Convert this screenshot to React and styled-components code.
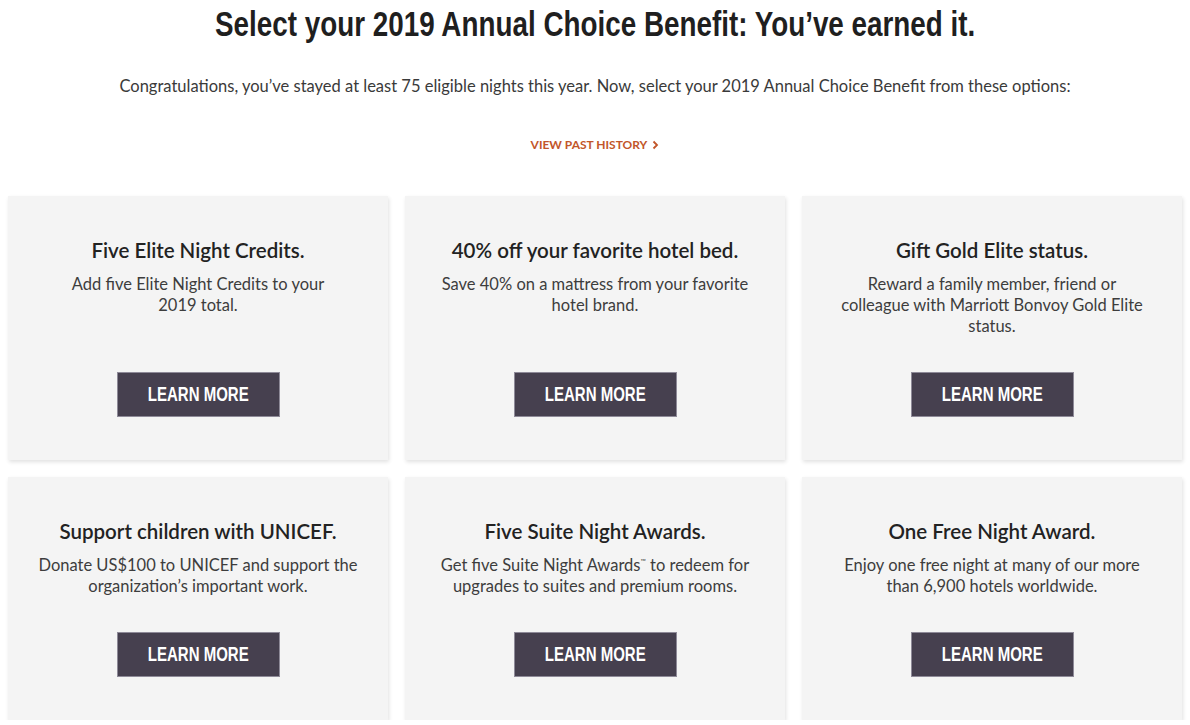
import styled, { createGlobalStyle } from 'styled-components'

const GlobalStyle = createGlobalStyle`
  body {
    margin: 0;
    background: #ffffff;
    font-family: 'Lato', 'Open Sans', sans-serif;
  }
`

const Page = styled.div`
  width: 1190px;
  display: flex;
  flex-direction: column;
  align-items: center;
  padding-top: 4px;
`

const Squeeze = styled.span`
  display: inline-block;
  white-space: nowrap;
  transform: scaleX(${(p) => p.$scale});
  transform-origin: center;
`

const Heading = styled.h1`
  margin: 0;
  font-family: 'Liberation Sans', Arial, sans-serif;
  font-weight: 700;
  font-size: 35px;
  line-height: 40px;
  color: #1f1f1f;
  white-space: nowrap;
`

const Intro = styled.p`
  margin: 32px 0 0;
  font-size: 16.5px;
  line-height: 20px;
  color: #3a3a3a;
`

const HistoryLink = styled.a`
  margin-top: 41px;
  display: flex;
  align-items: center;
  gap: 5px;
  font-size: 12px;
  line-height: 16px;
  font-weight: 700;
  color: #c2562a;
  text-transform: uppercase;
  text-decoration: none;
`

const Grid = styled.div`
  margin-top: 43px;
  width: 1174px;
  display: grid;
  grid-template-columns: repeat(3, 1fr);
  gap: 17px;
`

const Card = styled.div`
  background: #f4f4f4;
  box-shadow: 1px 2px 4px rgba(0, 0, 0, 0.12);
  display: flex;
  flex-direction: column;
  align-items: center;
  text-align: center;
  padding: 41px 30px 43px;
`

const CardTitle = styled.h2`
  margin: 0;
  font-size: 20.5px;
  line-height: 26px;
  font-weight: 600;
  color: #222222;
`

const CardText = styled.p`
  margin: 11px 0 35px;
  font-size: 16.5px;
  line-height: 21px;
  color: #3d3d3d;
  max-width: 320px;
`

const Tm = styled.span`
  font-size: 7px;
  vertical-align: top;
  line-height: 12px;
`

const LearnButton = styled.button`
  margin-top: auto;
  width: 163px;
  height: 45px;
  padding: 0;
  border: 1px solid #8e8a98;
  background: #46404f;
  color: #ffffff;
  font-family: 'Liberation Sans', Arial, sans-serif;
  font-weight: 700;
  font-size: 20px;
  text-transform: uppercase;
  cursor: pointer;
`

const benefits = [
  {
    title: 'Five Elite Night Credits.',
    text: (
      <>
        Add five Elite Night Credits to your
        <br />
        2019 total.
      </>
    ),
  },
  {
    title: '40% off your favorite hotel bed.',
    text: 'Save 40% on a mattress from your favorite hotel brand.',
  },
  {
    title: 'Gift Gold Elite status.',
    text: 'Reward a family member, friend or colleague with Marriott Bonvoy Gold Elite status.',
  },
  {
    title: 'Support children with UNICEF.',
    text: 'Donate US$100 to UNICEF and support the organization\u2019s important work.',
  },
  {
    title: 'Five Suite Night Awards.',
    text: (
      <>
        Get five Suite Night Awards<Tm>™</Tm> to redeem for upgrades to suites and premium rooms.
      </>
    ),
  },
  {
    title: 'One Free Night Award.',
    text: 'Enjoy one free night at many of our more than 6,900 hotels worldwide.',
  },
]

const App = () => {
  return (
    <Page>
      <GlobalStyle />
      <Heading>
        <Squeeze $scale={0.795}>Select your 2019 Annual Choice Benefit: You’ve earned it.</Squeeze>
      </Heading>
      <Intro>
        Congratulations, you’ve stayed at least 75 eligible nights this year. Now, select your
        2019 Annual Choice Benefit from these options:
      </Intro>
      <HistoryLink href='#'>
        View past history
        <svg width='7' height='10' viewBox='0 0 7 10'>
          <path d='M1.5 1.5 L5 5 L1.5 8.5' fill='none' stroke='currentColor' strokeWidth='1.8' />
        </svg>
      </HistoryLink>
      <Grid>
        {benefits.map((b, i) => (
          <Card key={i}>
            <CardTitle>{b.title}</CardTitle>
            <CardText>{b.text}</CardText>
            <LearnButton>
              <Squeeze $scale={0.75}>Learn more</Squeeze>
            </LearnButton>
          </Card>
        ))}
      </Grid>
    </Page>
  )
}

export default App
